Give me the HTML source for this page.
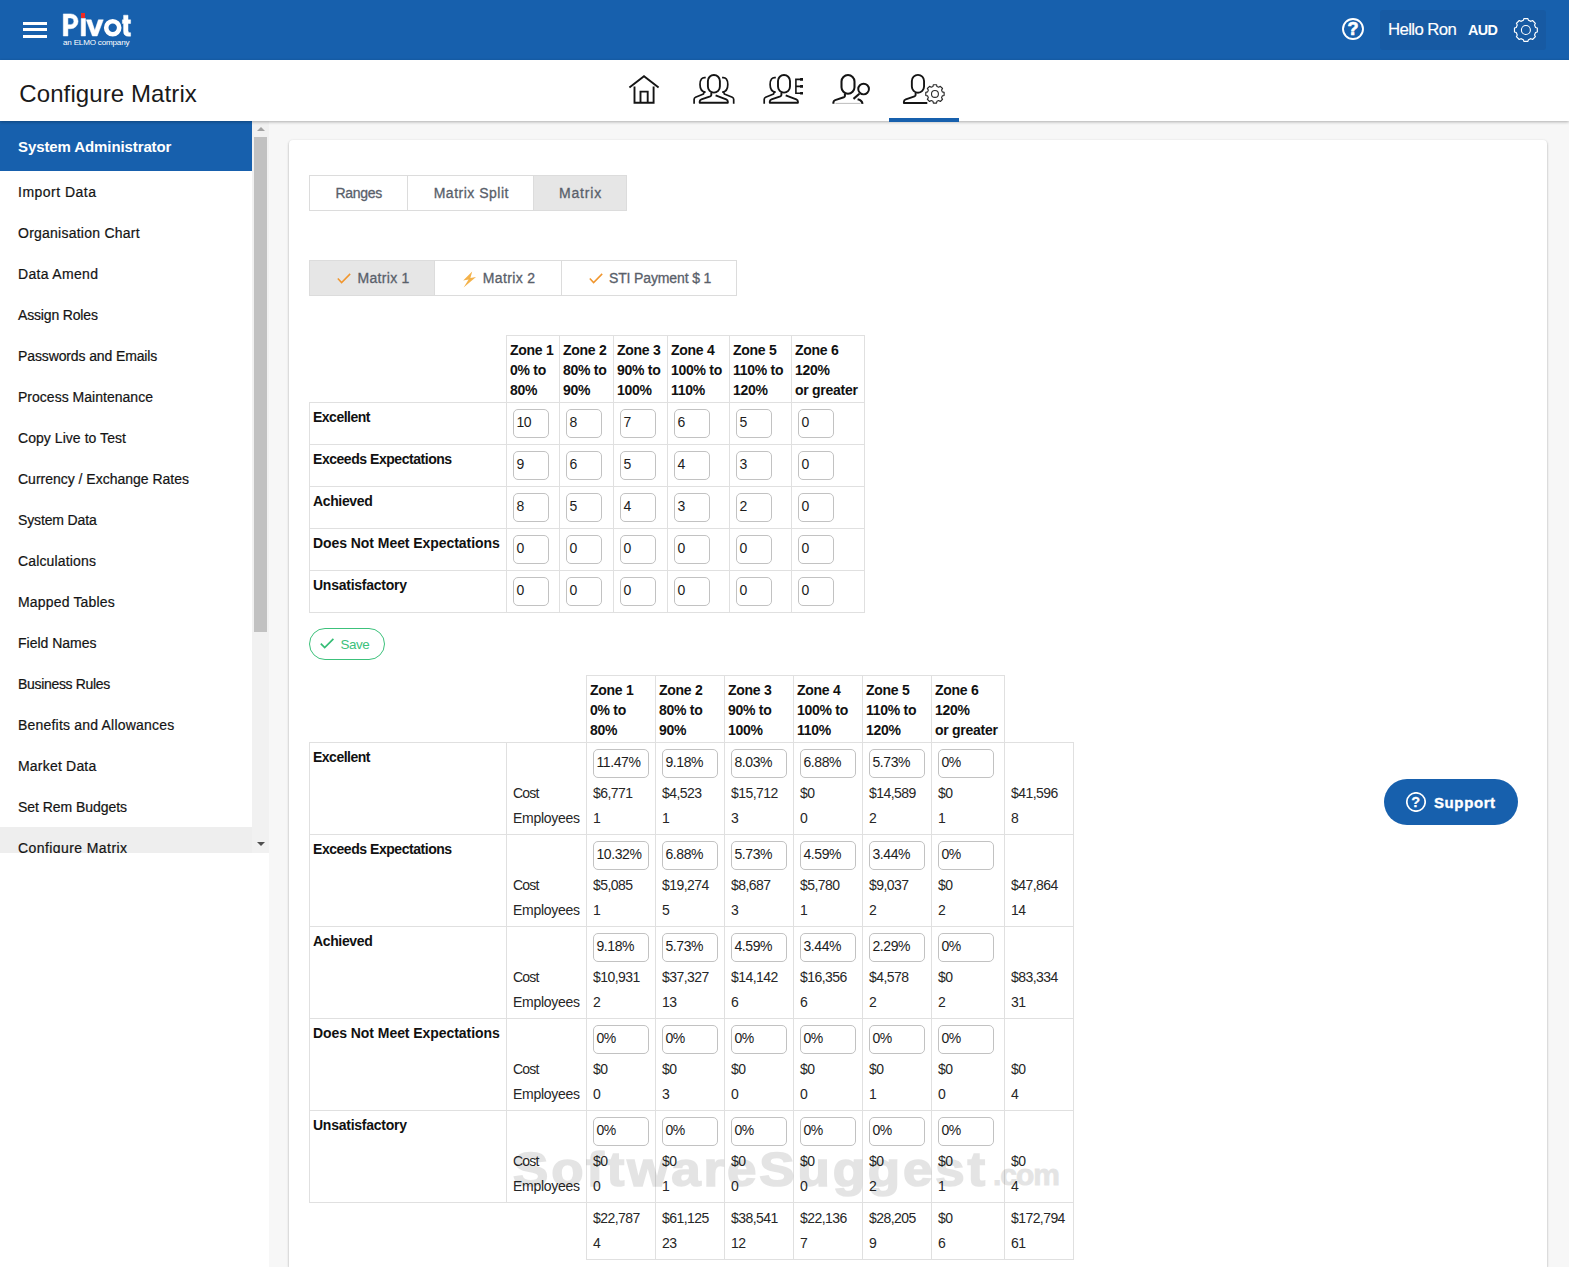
<!DOCTYPE html>
<html><head><meta charset="utf-8"><title>Configure Matrix</title>
<style>
html,body{margin:0;padding:0;overflow:hidden}
html{width:1569px;height:1267px}
body{width:1569px;height:1267px;overflow:hidden;position:relative;background:#f7f7f7;font-family:"Liberation Sans",sans-serif;font-size:14px;color:#1a1a1a}
*{box-sizing:border-box}
#hdr{position:absolute;left:0;top:0;width:1569px;height:60px;background:#1760ad}
#sub{position:absolute;left:0;top:60px;width:1569px;height:61px;background:#fff;box-shadow:0 1px 3px rgba(0,0,0,.3);z-index:5}
#title{position:absolute;left:19.3px;top:18.7px;letter-spacing:.1px;font-size:24px;line-height:30px;color:#1a1a1a;white-space:nowrap}
#logosub{position:absolute;left:63px;top:37.5px;color:#fff;font-size:8.1px;line-height:10px;white-space:nowrap;letter-spacing:-.2px}
#ham{position:absolute;left:23px;top:22px;width:24px;height:16px}
#ham i{position:absolute;left:0;width:24px;height:3px;background:#fff}
#userbox{position:absolute;left:1380px;top:10px;width:166px;height:40px;background:#175aa3;border-radius:3px}
#hello{position:absolute;left:1388px;top:20.1px;color:#fff;font-size:16.8px;line-height:20px;white-space:nowrap;letter-spacing:-.62px;-webkit-text-stroke:.15px #fff}
#aud{position:absolute;left:1468px;top:20.2px;color:#fff;font-size:14.4px;font-weight:bold;line-height:20px;letter-spacing:-.6px}
.nav{position:absolute;top:0;height:61px;width:70px}
#navact{position:absolute;left:889px;top:58px;width:70px;height:4px;background:#1760ad}

#side{position:absolute;left:0;top:121px;width:252px;height:732px;background:#fff;overflow:hidden}
#sidehead{position:absolute;left:0;top:0;width:252px;height:50px;background:#1760ad;color:#fff;font-weight:bold;font-size:15px;line-height:52px;padding-left:18px;white-space:nowrap;letter-spacing:-.1px}
.it{position:absolute;left:0;width:252px;height:41px;line-height:43px;padding-left:18px;font-size:14px;color:#141414;-webkit-text-stroke:.2px #141414;white-space:nowrap}
.it.act{background:#eee}
#sb{position:absolute;left:252px;top:121px;width:17px;height:732px;background:#f1f1f1}
#sbthumb{position:absolute;left:2px;top:16px;width:13px;height:495px;background:#c1c1c1}
#sbup{position:absolute;left:4.5px;top:6px;width:0;height:0;border-left:4px solid transparent;border-right:4px solid transparent;border-bottom:4px solid #a3a3a3}
#sbdn{position:absolute;left:4.5px;bottom:7px;width:0;height:0;border-left:4px solid transparent;border-right:4px solid transparent;border-top:4px solid #505050}
#sidebelow{position:absolute;left:0;top:853px;width:269px;height:414px;background:#fff}

#card{position:absolute;left:289px;top:140px;width:1258px;height:1127px;background:#fff;border-radius:4px 4px 0 0;box-shadow:0 1px 3px rgba(0,0,0,.16),0 1px 2px rgba(0,0,0,.22)}
.tabs{position:absolute;display:flex;height:36px;border:1px solid #dcdcdc;border-right:none}
.tab{position:relative;height:34px;line-height:34px;border-right:1px solid #dcdcdc;color:#59606a;-webkit-text-stroke:.3px #59606a;font-size:14px;white-space:nowrap;box-sizing:content-box}
.tab.on{background:#e6e6e6}
.tab span{position:absolute;top:0}
.ti{position:absolute}

table{position:absolute;border-collapse:separate;border-spacing:0;table-layout:fixed}
#t1{left:20px;top:195px;width:556px}
#t2{left:20px;top:535px;width:765px}
td{border-top:1px solid #e0e0e0;border-left:1px solid #e0e0e0;padding:3px;vertical-align:top;line-height:20px;font-size:14px;letter-spacing:-.27px;white-space:nowrap;overflow:visible}
td b{font-weight:bold;color:#111;position:relative;top:.5px;display:inline-block}
td.nb{border-top:none;border-left:none}
td.nb2{border-left:none}
td.nr{border-left:1px solid #e0e0e0}
tr td:last-child{border-right:1px solid #e0e0e0}
tr:last-child td{border-bottom:1px solid #e0e0e0}
tr:last-child td.nb2{border-bottom:none}
tr.hd td.nb:last-child{border-right:none}
.in{display:block;margin:3px;height:29px;border:1px solid #c2c2c2;border-radius:5px;padding:0 2.4px;line-height:25.4px;letter-spacing:-.38px;color:#1c1c1c;background:#fff}
.in.s{width:36px}
.in.w{width:56px}
.ln{height:25px;line-height:25px;padding-left:3px;color:#262626}
.ln.n{letter-spacing:-.57px}
.sp{height:35px}

#save{position:absolute;left:20px;top:488px;width:76px;height:32px;border:1px solid #3cc17b;border-radius:16px;color:#3cc17b;line-height:31px;font-size:13.4px;letter-spacing:-.45px;white-space:nowrap}
#save svg{position:absolute;left:10px;top:9px}
#save span{position:absolute;left:30.5px;top:0}

#support{position:absolute;left:1384px;top:779px;width:134px;height:46px;border-radius:23px;background:#1760ad;color:#fff;font-weight:bold;font-size:15px;line-height:47.4px;letter-spacing:.6px;-webkit-text-stroke:.35px #fff;z-index:6}
#support svg{position:absolute;left:21.8px;top:13.2px}
#support span{position:absolute;left:50px;top:0}
#wm{position:absolute;left:512.5px;top:1140px;font-size:48px;line-height:60px;font-weight:bold;color:#000;-webkit-text-stroke:1.6px #000;opacity:.1;white-space:nowrap;z-index:7;letter-spacing:2.6px;transform:scaleX(1.102);transform-origin:0 0}
#wm2{position:absolute;left:993px;top:1155px;font-size:30px;line-height:40px;font-weight:bold;color:#000;-webkit-text-stroke:1px #000;opacity:.1;white-space:nowrap;z-index:7;letter-spacing:-1px;transform:scaleX(1.0);transform-origin:0 0}

</style></head><body>
<div id="hdr">
<div id="ham"><i style="top:-.2px"></i><i style="top:6.4px"></i><i style="top:13px"></i></div>
<svg id="logo" style="position:absolute;left:60px;top:10px" width="76" height="30" viewBox="60 10 76 30" fill="#fff" stroke="#fff" stroke-width=".5" stroke-linejoin="round">
<path fill-rule="evenodd" d="M63.3 13.9 H70.7 A7.4 7.4 0 0 1 70.7 28.7 H67.9 V36 H63.3 Z M67.9 17.9 V24.7 H70.5 A3.4 3.4 0 0 0 70.5 17.9 Z"/>
<rect x="81.2" y="18.5" width="4.3" height="17.5"/>
<path d="M86.3 19.8 H91.2 L94.8 30.6 L98.4 19.8 H103.3 L97.2 36 H92.4 Z"/>
<circle cx="112.7" cy="27.8" r="6.5" fill="none" stroke-width="4.6"/>
<path d="M123.6 15.2 H128 V19.8 H130.6 V23.5 H128 V30.8 Q128 32.7 129.8 32.7 H130.6 V36.2 H128.4 Q123.6 36.2 123.6 31.4 V23.5 H122.4 V19.8 H123.6 Z"/>
</svg><div id="logodot" style="position:absolute;left:81px;top:13.1px;width:4.4px;height:4.7px;background:#ee2a24"></div>
<div id="logosub">an ELMO company</div>
<svg style="position:absolute;left:1341px;top:17.3px" width="24" height="24" viewBox="0 0 24 24"><circle cx="12" cy="12" r="10" fill="none" stroke="#fff" stroke-width="1.9"/><text x="12" y="18.4" text-anchor="middle" font-family="Liberation Sans" font-weight="bold" font-size="18" fill="#fff" stroke="#fff" stroke-width=".7">?</text></svg>
<div id="userbox"></div><div id="hello">Hello Ron</div><div id="aud">AUD</div>
<svg id="gear" style="position:absolute;left:1510px;top:14px" width="32" height="32" viewBox="1510 14 32 32"><circle cx="1525.9" cy="30" r="4.5" fill="none" stroke="#fff" stroke-width="1.1"/><path d="M1523.33 20.34 L1523.88 18.58 L1527.92 18.58 L1528.47 20.34 L1530.92 21.35 L1532.55 20.49 L1535.41 23.35 L1534.55 24.98 L1535.56 27.43 L1537.32 27.98 L1537.32 32.02 L1535.56 32.57 L1534.55 35.02 L1535.41 36.65 L1532.55 39.51 L1530.92 38.65 L1528.47 39.66 L1527.92 41.42 L1523.88 41.42 L1523.33 39.66 L1520.88 38.65 L1519.25 39.51 L1516.39 36.65 L1517.25 35.02 L1516.24 32.57 L1514.48 32.02 L1514.48 27.98 L1516.24 27.43 L1517.25 24.98 L1516.39 23.35 L1519.25 20.49 L1520.88 21.35 Z" fill="none" stroke="#fff" stroke-width="1.15" stroke-linejoin="round"/></svg>
</div>
<div id="sub"><div id="title">Configure Matrix</div>
<div id="navact"></div>
<svg id="navsvg" style="position:absolute;left:600px;top:0" width="400" height="61" viewBox="600 60 400 61" fill="none" stroke="#141414" stroke-width="1.9" stroke-linecap="butt" stroke-linejoin="round">
<path d="M629.4 87.4 L644 76.2 L658.6 87.4" stroke-width="1.9" stroke-linejoin="miter"/>
<path d="M634.5 86.6 V102.7 H653.6 V86.6" stroke-linejoin="miter"/>
<path d="M640.5 102.7 V91.6 H647.7 V102.7" stroke-linejoin="miter"/>
<rect x="707.90" y="75.00" width="12.00" height="17.60" rx="6.00" ry="6.00"/>
<path d="M711.30 92.6 V95.1 Q711.30 96 710.20 96.4 L701.40 99.3 Q699.70 100 699.70 101.6 V102.8 H727.80 V101.6 Q727.80 100 726.20 99.4 L715.60 95.4"/>
<path d="M705.70 77.7 C701.90 77 700.00 79.6 700.00 84.6 C700.00 89.6 701.90 92 705.60 92.2 M703.90 92.4 L703.50 94 L695.50 97.3 Q694.10 97.9 694.10 99.5 V103.7" stroke-width="1.7"/>
<path d="M722.10 77.7 C725.90 77 727.80 79.6 727.80 84.6 C727.80 89.6 725.90 92 722.20 92.2 M723.90 92.4 L724.30 94 L732.30 97.3 Q733.70 97.9 733.70 99.5 V103.7" stroke-width="1.7"/>
<rect x="778.00" y="75.00" width="12.00" height="17.60" rx="6.00" ry="6.00"/>
<path d="M781.40 92.6 V95.1 Q781.40 96 780.30 96.4 L771.50 99.3 Q769.80 100 769.80 101.6 V102.8 H797.90 V101.6 Q797.90 100 796.30 99.4 L785.70 95.4"/>
<path d="M775.80 77.7 C772.00 77 770.10 79.6 770.10 84.6 C770.10 89.6 772.00 92 775.70 92.2 M774.00 92.4 L773.60 94 L765.60 97.3 Q764.20 97.9 764.20 99.5 V103.7" stroke-width="1.7"/>
<path d="M795.9 78.6 V93.9 M795.9 79.4 H801 M795.9 86.4 H801 M795.9 93.3 H801" stroke-width="1.6" stroke-linejoin="miter"/>
<path d="M800.1 78.1 h2.9 v2.6 h-2.9z M800.1 85.1 h2.9 v2.6 h-2.9z M800.1 92 h2.9 v2.6 h-2.9z" fill="#141414" stroke="none"/>
<g stroke-width="2.05">
<rect x="841.50" y="75.00" width="13.00" height="18.70" rx="6.50" ry="6.50"/>
<path d="M844.9 93.6 V96 Q844.9 96.9 843.8 97.3 L835.2 100.1 Q833.5 100.8 833.4 102.4 V103.8"/>
<circle cx="863.6" cy="89" r="5.35" stroke-width="1.95"/>
<path d="M859.4 93.8 L853.5 98.9" stroke-linecap="butt"/>
<path d="M857.6 99.2 C860.3 99.9 862.3 101.4 862.5 103.8"/>
</g>
<path d="M835.5 103.4 H860.5" stroke="#b5b5b5" stroke-width="0.9"/>
<rect x="911.85" y="74.90" width="12.20" height="17.80" rx="6.10" ry="6.10"/>
<path d="M915.6 92.8 V95 Q915.6 95.9 914.5 96.3 L905.8 99.3 Q903.9 100 903.9 101.7 V103 H927.3" />
<circle cx="934.95" cy="93.9" r="3.45" stroke-width="1.1" stroke="#2a2a2a"/>
<path d="M932.92 86.58 L933.38 84.73 L936.52 84.73 L936.98 86.58 L938.70 87.29 L940.32 86.31 L942.54 88.53 L941.56 90.15 L942.27 91.87 L944.12 92.33 L944.12 95.47 L942.27 95.93 L941.56 97.65 L942.54 99.27 L940.32 101.49 L938.70 100.51 L936.98 101.22 L936.52 103.07 L933.38 103.07 L932.92 101.22 L931.20 100.51 L929.58 101.49 L927.36 99.27 L928.34 97.65 L927.63 95.93 L925.78 95.47 L925.78 92.33 L927.63 91.87 L928.34 90.15 L927.36 88.53 L929.58 86.31 L931.20 87.29 Z" stroke-width="1.15" stroke="#2a2a2a" stroke-linejoin="round"/>
</svg>

</div>
<div id="side"><div id="sidehead">System Administrator</div>
<div class="it" style="top:50px;letter-spacing:0.49px">Import Data</div>
<div class="it" style="top:91px;letter-spacing:0.24px">Organisation Chart</div>
<div class="it" style="top:132px;letter-spacing:0.33px">Data Amend</div>
<div class="it" style="top:173px;letter-spacing:-0.16px">Assign Roles</div>
<div class="it" style="top:214px;letter-spacing:-0.12px">Passwords and Emails</div>
<div class="it" style="top:255px;letter-spacing:0.02px">Process Maintenance</div>
<div class="it" style="top:296px;letter-spacing:0.05px">Copy Live to Test</div>
<div class="it" style="top:337px;letter-spacing:-0.01px">Currency / Exchange Rates</div>
<div class="it" style="top:378px;letter-spacing:-0.14px">System Data</div>
<div class="it" style="top:419px;letter-spacing:0.15px">Calculations</div>
<div class="it" style="top:460px;letter-spacing:0.17px">Mapped Tables</div>
<div class="it" style="top:501px;letter-spacing:-0.01px">Field Names</div>
<div class="it" style="top:542px;letter-spacing:-0.32px">Business Rules</div>
<div class="it" style="top:583px;letter-spacing:0.20px">Benefits and Allowances</div>
<div class="it" style="top:624px;letter-spacing:0.20px">Market Data</div>
<div class="it" style="top:665px;letter-spacing:-0.05px">Set Rem Budgets</div>
<div class="it act" style="top:706px;letter-spacing:0.42px">Configure Matrix</div>
</div>
<div id="sb"><div id="sbthumb"></div><div id="sbup"></div><div id="sbdn"></div></div><div id="sidebelow"></div>
<div id="card">
<div class="tabs" style="left:20px;top:35px"><div class="tab" style="width:97px"><span style="left:25.5px;letter-spacing:-0.30px">Ranges</span></div><div class="tab" style="width:125px"><span style="left:25.7px;letter-spacing:0.50px">Matrix Split</span></div><div class="tab on" style="width:92px"><span style="left:24.9px;letter-spacing:0.84px">Matrix</span></div></div>
<div class="tabs" style="left:20px;top:120px"><div class="tab on" style="width:124px"><svg class="ti" style="left:27px;top:12px" width="14" height="11" viewBox="0 0 14 11"><path d="M0.8 5.6 L4.6 9.6 L13.2 0.9" fill="none" stroke="#f0962e" stroke-width="1.5"/></svg><span style="left:47.6px;letter-spacing:0.29px">Matrix 1</span></div><div class="tab" style="width:126px"><svg class="ti" style="left:27px;top:9.5px" width="15" height="17" viewBox="0 0 15 17"><path d="M10.2 0.6 L1.2 9.6 L6.6 8.6 L1.6 16.4 L14 6 L8.4 7 Z" fill="#f4b24a"/></svg><span style="left:47.7px;letter-spacing:0.37px">Matrix 2</span></div><div class="tab" style="width:174px"><svg class="ti" style="left:27px;top:12px" width="14" height="11" viewBox="0 0 14 11"><path d="M0.8 5.6 L4.6 9.6 L13.2 0.9" fill="none" stroke="#f0962e" stroke-width="1.5"/></svg><span style="left:47.0px;letter-spacing:-0.14px">STI Payment $ 1</span></div></div>
<table id="t1" cellspacing="0"><colgroup><col style="width:197px"><col style="width:53px"><col style="width:54px"><col style="width:54px"><col style="width:62px"><col style="width:62px"><col style="width:74px"></colgroup>
<tr class="hd"><td class="nb"></td><td><b>Zone 1<br>0% to<br>80%</b></td><td><b>Zone 2<br>80% to<br>90%</b></td><td><b>Zone 3<br>90% to<br>100%</b></td><td><b>Zone 4<br>100% to<br>110%</b></td><td><b>Zone 5<br>110% to<br>120%</b></td><td><b>Zone 6<br>120%<br>or greater</b></td></tr>
<tr class="r"><td class="lb"><b style="letter-spacing:-0.51px">Excellent</b></td><td><span class="in s">10</span></td><td><span class="in s">8</span></td><td><span class="in s">7</span></td><td><span class="in s">6</span></td><td><span class="in s">5</span></td><td><span class="in s">0</span></td></tr>
<tr class="r"><td class="lb"><b style="letter-spacing:-0.46px">Exceeds Expectations</b></td><td><span class="in s">9</span></td><td><span class="in s">6</span></td><td><span class="in s">5</span></td><td><span class="in s">4</span></td><td><span class="in s">3</span></td><td><span class="in s">0</span></td></tr>
<tr class="r"><td class="lb"><b style="letter-spacing:-0.36px">Achieved</b></td><td><span class="in s">8</span></td><td><span class="in s">5</span></td><td><span class="in s">4</span></td><td><span class="in s">3</span></td><td><span class="in s">2</span></td><td><span class="in s">0</span></td></tr>
<tr class="r"><td class="lb"><b style="letter-spacing:-0.06px">Does Not Meet Expectations</b></td><td><span class="in s">0</span></td><td><span class="in s">0</span></td><td><span class="in s">0</span></td><td><span class="in s">0</span></td><td><span class="in s">0</span></td><td><span class="in s">0</span></td></tr>
<tr class="r"><td class="lb"><b style="letter-spacing:-0.25px">Unsatisfactory</b></td><td><span class="in s">0</span></td><td><span class="in s">0</span></td><td><span class="in s">0</span></td><td><span class="in s">0</span></td><td><span class="in s">0</span></td><td><span class="in s">0</span></td></tr>
</table>
<div id="save"><svg width="14" height="11" viewBox="0 0 14 11"><path d="M0.8 5.6 L4.7 9.6 L13.4 0.9" fill="none" stroke="#35bd76" stroke-width="1.7"/></svg><span>Save</span></div>
<table id="t2" cellspacing="0"><colgroup><col style="width:197px"><col style="width:80px"><col style="width:69px"><col style="width:69px"><col style="width:69px"><col style="width:69px"><col style="width:69px"><col style="width:73px"><col style="width:70px"></colgroup>
<tr class="hd"><td class="nb"></td><td class="nb"></td><td><b>Zone 1<br>0% to<br>80%</b></td><td><b>Zone 2<br>80% to<br>90%</b></td><td><b>Zone 3<br>90% to<br>100%</b></td><td><b>Zone 4<br>100% to<br>110%</b></td><td><b>Zone 5<br>110% to<br>120%</b></td><td><b>Zone 6<br>120%<br>or greater</b></td><td class="nb nr"></td></tr>
<tr class="g"><td class="lb"><b style="letter-spacing:-0.51px">Excellent</b></td><td><div class="sp"></div><div class="ln" style="letter-spacing:-.77px">Cost</div><div class="ln">Employees</div></td><td><span class="in w">11.47%</span><div class="ln n">$6,771</div><div class="ln n">1</div></td><td><span class="in w">9.18%</span><div class="ln n">$4,523</div><div class="ln n">1</div></td><td><span class="in w">8.03%</span><div class="ln n">$15,712</div><div class="ln n">3</div></td><td><span class="in w">6.88%</span><div class="ln n">$0</div><div class="ln n">0</div></td><td><span class="in w">5.73%</span><div class="ln n">$14,589</div><div class="ln n">2</div></td><td><span class="in w">0%</span><div class="ln n">$0</div><div class="ln n">1</div></td><td><div class="sp"></div><div class="ln n">$41,596</div><div class="ln n">8</div></td></tr>
<tr class="g"><td class="lb"><b style="letter-spacing:-0.46px">Exceeds Expectations</b></td><td><div class="sp"></div><div class="ln" style="letter-spacing:-.77px">Cost</div><div class="ln">Employees</div></td><td><span class="in w">10.32%</span><div class="ln n">$5,085</div><div class="ln n">1</div></td><td><span class="in w">6.88%</span><div class="ln n">$19,274</div><div class="ln n">5</div></td><td><span class="in w">5.73%</span><div class="ln n">$8,687</div><div class="ln n">3</div></td><td><span class="in w">4.59%</span><div class="ln n">$5,780</div><div class="ln n">1</div></td><td><span class="in w">3.44%</span><div class="ln n">$9,037</div><div class="ln n">2</div></td><td><span class="in w">0%</span><div class="ln n">$0</div><div class="ln n">2</div></td><td><div class="sp"></div><div class="ln n">$47,864</div><div class="ln n">14</div></td></tr>
<tr class="g"><td class="lb"><b style="letter-spacing:-0.36px">Achieved</b></td><td><div class="sp"></div><div class="ln" style="letter-spacing:-.77px">Cost</div><div class="ln">Employees</div></td><td><span class="in w">9.18%</span><div class="ln n">$10,931</div><div class="ln n">2</div></td><td><span class="in w">5.73%</span><div class="ln n">$37,327</div><div class="ln n">13</div></td><td><span class="in w">4.59%</span><div class="ln n">$14,142</div><div class="ln n">6</div></td><td><span class="in w">3.44%</span><div class="ln n">$16,356</div><div class="ln n">6</div></td><td><span class="in w">2.29%</span><div class="ln n">$4,578</div><div class="ln n">2</div></td><td><span class="in w">0%</span><div class="ln n">$0</div><div class="ln n">2</div></td><td><div class="sp"></div><div class="ln n">$83,334</div><div class="ln n">31</div></td></tr>
<tr class="g"><td class="lb"><b style="letter-spacing:-0.06px">Does Not Meet Expectations</b></td><td><div class="sp"></div><div class="ln" style="letter-spacing:-.77px">Cost</div><div class="ln">Employees</div></td><td><span class="in w">0%</span><div class="ln n">$0</div><div class="ln n">0</div></td><td><span class="in w">0%</span><div class="ln n">$0</div><div class="ln n">3</div></td><td><span class="in w">0%</span><div class="ln n">$0</div><div class="ln n">0</div></td><td><span class="in w">0%</span><div class="ln n">$0</div><div class="ln n">0</div></td><td><span class="in w">0%</span><div class="ln n">$0</div><div class="ln n">1</div></td><td><span class="in w">0%</span><div class="ln n">$0</div><div class="ln n">0</div></td><td><div class="sp"></div><div class="ln n">$0</div><div class="ln n">4</div></td></tr>
<tr class="g"><td class="lb"><b style="letter-spacing:-0.25px">Unsatisfactory</b></td><td><div class="sp"></div><div class="ln" style="letter-spacing:-.77px">Cost</div><div class="ln">Employees</div></td><td><span class="in w">0%</span><div class="ln n">$0</div><div class="ln n">0</div></td><td><span class="in w">0%</span><div class="ln n">$0</div><div class="ln n">1</div></td><td><span class="in w">0%</span><div class="ln n">$0</div><div class="ln n">0</div></td><td><span class="in w">0%</span><div class="ln n">$0</div><div class="ln n">0</div></td><td><span class="in w">0%</span><div class="ln n">$0</div><div class="ln n">2</div></td><td><span class="in w">0%</span><div class="ln n">$0</div><div class="ln n">1</div></td><td><div class="sp"></div><div class="ln n">$0</div><div class="ln n">4</div></td></tr>
<tr class="tt"><td class="nb2"></td><td class="nb2"></td><td><div class="ln n">$22,787</div><div class="ln n">4</div></td><td><div class="ln n">$61,125</div><div class="ln n">23</div></td><td><div class="ln n">$38,541</div><div class="ln n">12</div></td><td><div class="ln n">$22,136</div><div class="ln n">7</div></td><td><div class="ln n">$28,205</div><div class="ln n">9</div></td><td><div class="ln n">$0</div><div class="ln n">6</div></td><td><div class="ln n">$172,794</div><div class="ln n">61</div></td></tr>
</table>
</div>
<div id="support"><svg width="20" height="20" viewBox="0 0 20 20"><circle cx="10" cy="10" r="9.2" fill="none" stroke="#fff" stroke-width="1.7"/><text x="10" y="15" text-anchor="middle" font-family="Liberation Sans" font-size="14.5" fill="#fff" stroke="#fff" stroke-width=".3">?</text></svg><span>Support</span></div>
<div id="wm">SoftwareSuggest</div><div id="wm2">.com</div>
</body></html>
